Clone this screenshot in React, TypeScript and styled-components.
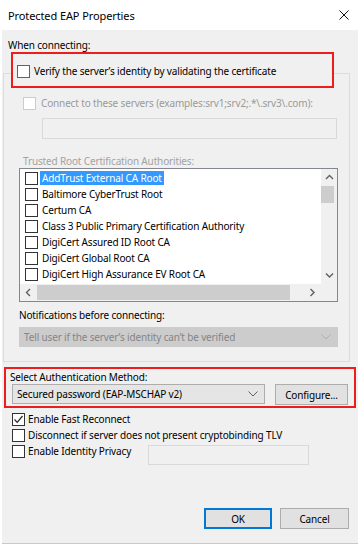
import styled, { createGlobalStyle } from 'styled-components';

const Global = createGlobalStyle`
    html, body {
        margin: 0;
        padding: 0;
        background: #ffffff;
    }
    * {
        box-sizing: border-box;
    }
`;

const Window = styled.div`
    width: 360px;
    height: 544px;
    display: flex;
    flex-direction: column;
    background: #ffffff;
    font-family: "Noto Sans", "Open Sans", sans-serif;
    font-size: 10px;
    letter-spacing: -0.15px;
    color: #000;
    overflow: hidden;
`;

const TitleBar = styled.div`
    height: 30px;
    display: flex;
    align-items: center;
    justify-content: space-between;
    padding: 0 11px 0 8px;
    font-size: 11px;
    letter-spacing: -0.1px;
`;

const Body = styled.div`
    flex: 1;
    display: flex;
    flex-direction: column;
    margin: 0 2px;
    padding: 0 1px;
    background: #f0f0f0;
    border-bottom: 1px solid #c9c9c9;
`;

const Label = styled.div<{ $muted?: boolean; $indent?: number }>`
    height: 14px;
    line-height: 14px;
    padding-left: ${p => p.$indent ?? 0}px;
    color: ${p => (p.$muted ? '#a3a3a3' : '#000')};
    white-space: nowrap;
`;

const Group = styled.fieldset`
    width: 347px;
    margin: 0;
    padding: 0 11px 14px 15px;
    border: 1px solid #dcdcdc;
    display: flex;
    flex-direction: column;
`;

const Legend = styled.legend`
    padding: 0 0 6px 0;
    margin-left: -8px;
`;

const Highlight = styled.div<{ $width: number; $height: number }>`
    width: ${p => p.$width}px;
    height: ${p => p.$height}px;
    border: 2px solid #ee1d1d;
    display: flex;
    flex-direction: column;
`;

const CheckRow = styled.div<{ $indent?: number; $gap?: number }>`
    display: flex;
    align-items: center;
    gap: ${p => p.$gap ?? 3}px;
    height: 16px;
    padding-left: ${p => p.$indent ?? 0}px;
    white-space: nowrap;
`;

const Box = styled.span<{ $tone?: 'normal' | 'disabled' | 'focus' }>`
    width: 13px;
    height: 13px;
    flex-shrink: 0;
    display: inline-flex;
    align-items: center;
    justify-content: center;
    background: #ffffff;
    border: 1px solid ${p =>
        p.$tone === 'disabled' ? '#cccccc' : p.$tone === 'focus' ? '#3a6d93' : '#333333'};
`;

const RowText = styled.span<{ $muted?: boolean; $selected?: boolean }>`
    line-height: 14px;
    padding: 0 2px;
    color: ${p => (p.$selected ? '#fff' : p.$muted ? '#9a9a9a' : '#000')};
    background: ${p => (p.$selected ? '#3399ff' : 'transparent')};
`;

const TextField = styled.div<{ $width: number; $height: number; $left?: number }>`
    width: ${p => p.$width}px;
    height: ${p => p.$height}px;
    margin-left: ${p => p.$left ?? 0}px;
    border: 1px solid #d9d9d9;
    background: #f0f0f0;
    flex-shrink: 0;
`;

const ListBox = styled.div`
    height: 134px;
    border: 1px solid #828790;
    background: #ffffff;
    display: grid;
    grid-template-columns: 1fr 16px;
    grid-template-rows: 1fr 17px;
`;

const Items = styled.div`
    padding: 1px 0 0 5px;
    display: flex;
    flex-direction: column;
    overflow: hidden;
`;

const VScroll = styled.div`
    display: flex;
    flex-direction: column;
    background: #f0f0f0;
`;

const HScroll = styled.div`
    display: flex;
    background: #f0f0f0;
`;

const ArrowCell = styled.div<{ $size?: number }>`
    width: ${p => p.$size ?? 17}px;
    height: 17px;
    flex-shrink: 0;
    display: flex;
    align-items: center;
    justify-content: center;
`;

const Track = styled.div<{ $vertical?: boolean }>`
    flex: 1;
    display: flex;
    flex-direction: ${p => (p.$vertical ? 'column' : 'row')};
`;

const Thumb = styled.div<{ $vertical?: boolean; $size: number }>`
    background: #cdcdcd;
    ${p =>
        p.$vertical
            ? `height: ${p.$size}px; width: 13px; margin: 0 auto 0 0;`
            : `width: ${p.$size}px; height: 15px; margin: auto 0;`}
`;

const Corner = styled.div`
    background: #f0f0f0;
`;

const Combo = styled.div<{ $disabled?: boolean; $width?: number }>`
    height: 20px;
    width: ${p => (p.$width ? `${p.$width}px` : 'auto')};
    display: flex;
    align-items: center;
    justify-content: space-between;
    padding: 0 6px 0 4px;
    background: ${p => (p.$disabled ? '#cccccc' : '#e5e5e5')};
    border: 1px solid ${p => (p.$disabled ? '#cccccc' : '#adadad')};
    color: ${p => (p.$disabled ? '#858585' : '#000')};
    white-space: nowrap;
`;

const MethodRow = styled.div`
    display: flex;
    align-items: flex-start;
    gap: 10px;
    padding-left: 6px;
`;

const Button = styled.div<{ $default?: boolean; $width: number }>`
    width: ${p => p.$width}px;
    height: 21px;
    display: flex;
    align-items: center;
    justify-content: center;
    background: #e1e1e1;
    border: ${p => (p.$default ? '2px solid #0078d7' : '1px solid #adadad')};
`;

const Options = styled.div`
    display: flex;
    flex-direction: column;
    margin-top: 3px;
`;

const PrivacyRow = styled.div`
    display: flex;
    align-items: flex-start;
`;

const Footer = styled.div`
    margin-top: auto;
    display: flex;
    justify-content: flex-end;
    gap: 8px;
    padding: 0 8px 14px 0;
`;

const Chevron = ({ dir, color = '#606060' }: { dir: 'up' | 'down' | 'left' | 'right'; color?: string }) => {
    const d = {
        up: 'M1 5 L4.5 1.5 L8 5',
        down: 'M1 1.5 L4.5 5 L8 1.5',
        left: 'M5 1 L1.5 4.5 L5 8',
        right: 'M1.5 1 L5 4.5 L1.5 8',
    }[dir];
    const horiz = dir === 'up' || dir === 'down';
    return (
        <svg width={horiz ? 9 : 7} height={horiz ? 7 : 9} viewBox={horiz ? '0 0 9 7' : '0 0 7 9'}>
            <path d={d} fill="none" stroke={color} strokeWidth="1.4" />
        </svg>
    );
};

const ComboArrow = ({ color }: { color: string }) => (
    <svg width="10" height="6" viewBox="0 0 10 6">
        <path d="M0.5 0.5 L5 5 L9.5 0.5" fill="none" stroke={color} strokeWidth="1" />
    </svg>
);

const Tick = () => (
    <svg width="11" height="11" viewBox="0 0 11 11">
        <path d="M1.5 5.5 L4.2 8.3 L9.5 2" fill="none" stroke="#222" strokeWidth="1.2" />
    </svg>
);

const certificates = [
    'AddTrust External CA Root',
    'Baltimore CyberTrust Root',
    'Certum CA',
    'Class 3 Public Primary Certification Authority',
    'DigiCert Assured ID Root CA',
    'DigiCert Global Root CA',
    'DigiCert High Assurance EV Root CA',
];

export default function App() {
    return (
        <Window>
            <Global />
            <TitleBar>
                <span>Protected EAP Properties</span>
                <svg width="10" height="10" viewBox="0 0 10 10">
                    <path d="M0.5 0.5 L9.5 9.5 M9.5 0.5 L0.5 9.5" stroke="#111" strokeWidth="1" />
                </svg>
            </TitleBar>
            <Body>
                <Label style={{ marginTop: 8 }} $indent={5}>When connecting:</Label>
                <Group>
                    <Legend>
                        <Highlight $width={323} $height={36}>
                            <CheckRow $indent={4} $gap={2} style={{ marginTop: 9 }}>
                                <Box $tone="focus" />
                                <RowText>Verify the server’s identity by validating the certificate</RowText>
                            </CheckRow>
                        </Highlight>
                    </Legend>
                    <CheckRow $indent={4} style={{ marginTop: 1 }}>
                        <Box $tone="disabled" />
                        <RowText $muted>Connect to these servers (examples:srv1;srv2;.*\.srv3\.com):</RowText>
                    </CheckRow>
                    <TextField $width={295} $height={21} $left={23} style={{ marginTop: 7 }} />
                    <Label $muted $indent={4} style={{ marginTop: 15 }}>Trusted Root Certification Authorities:</Label>
                    <ListBox>
                        <Items>
                            {certificates.map((name, i) => (
                                <CheckRow key={name} $gap={2}>
                                    <Box />
                                    <RowText $selected={i === 0}>{name}</RowText>
                                </CheckRow>
                            ))}
                        </Items>
                        <VScroll>
                            <ArrowCell $size={16}><Chevron dir="up" /></ArrowCell>
                            <Track $vertical>
                                <Thumb $vertical $size={17} />
                            </Track>
                            <ArrowCell $size={16}><Chevron dir="down" /></ArrowCell>
                        </VScroll>
                        <HScroll>
                            <ArrowCell><Chevron dir="left" /></ArrowCell>
                            <Track>
                                <Thumb $size={253} />
                            </Track>
                            <ArrowCell><Chevron dir="right" /></ArrowCell>
                        </HScroll>
                        <Corner />
                    </ListBox>
                    <Label style={{ marginTop: 6 }}>Notifications before connecting:</Label>
                    <Combo $disabled style={{ marginTop: 5 }}>
                        <span>Tell user if the server’s identity can’t be verified</span>
                        <ComboArrow color="#b0b0b0" />
                    </Combo>
                </Group>
                <Highlight $width={352} $height={41} style={{ marginTop: 5, marginLeft: 1 }}>
                    <Label $indent={4} style={{ marginTop: 1 }}>Select Authentication Method:</Label>
                    <MethodRow>
                        <Combo $width={253}>
                            <span>Secured password (EAP-MSCHAP v2)</span>
                            <ComboArrow color="#606060" />
                        </Combo>
                        <Button $width={73}>Configure...</Button>
                    </MethodRow>
                </Highlight>
                <Options>
                    <CheckRow $indent={9} $gap={1}>
                        <Box><Tick /></Box>
                        <RowText>Enable Fast Reconnect</RowText>
                    </CheckRow>
                    <CheckRow $indent={9} $gap={1}>
                        <Box />
                        <RowText>Disconnect if server does not present cryptobinding TLV</RowText>
                    </CheckRow>
                    <PrivacyRow>
                        <CheckRow $indent={9} $gap={1} style={{ width: 145 }}>
                            <Box />
                            <RowText>Enable Identity Privacy</RowText>
                        </CheckRow>
                        <TextField $width={161} $height={20} style={{ marginTop: 2 }} />
                    </PrivacyRow>
                </Options>
                <Footer>
                    <Button $default $width={68}>OK</Button>
                    <Button $width={69}>Cancel</Button>
                </Footer>
            </Body>
        </Window>
    );
}
